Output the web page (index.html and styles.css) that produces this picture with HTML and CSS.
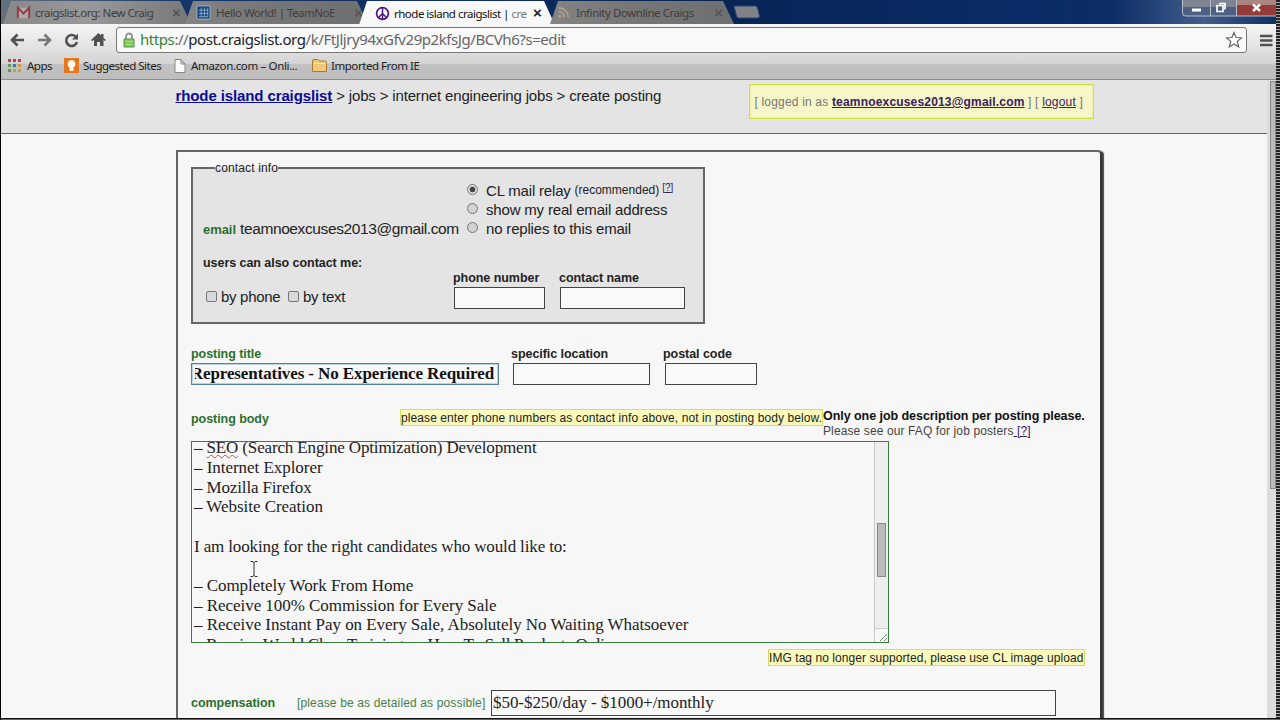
FILE: index.html
```html
<!DOCTYPE html>
<html lang="en">
<head>
<meta charset="utf-8">
<title>rhode island craigslist | create posting</title>
<link rel="stylesheet" href="styles.css">
</head>
<body>
<div class="window">
  <div class="tabstrip">
    <div class="tab tab-one"><svg class="fav" viewBox="0 0 16 16"><path d="M2 3h12v11H2z" fill="#b5aaaa"/><path d="M2 14V3l6 6 6-6v11" fill="none" stroke="#963f48" stroke-width="2.2"/></svg><span class="tab-title t1">craigslist.org: New Craig</span><span class="x">×</span></div>
    <div class="tab tab-two"><svg class="fav" viewBox="0 0 16 16"><path d="M1 1h14v14H1z" fill="#17467c" stroke="#9db3c7"/><path d="M3 5.500h10M3 9h10M3 12.500h10M5.500 3v10M9 3v10M12.500 3v10" stroke="#9dbbd6" stroke-width=".8"/></svg><span class="tab-title t2">Hello World! | TeamNoE</span><span class="x">×</span></div>
    <div class="tab tab-active"><svg class="fav" viewBox="0 0 16 16"><circle cx="8" cy="8" r="6.300" fill="#fff" stroke="#4d1681" stroke-width="1.800"/><path d="M8 2v12M8 8l-4.500 4.500M8 8l4.500 4.500" stroke="#4d1681" stroke-width="1.600"/></svg><span class="tab-title t3">rhode island craigslist | <span class="fade">cre</span></span><span class="x">×</span></div>
    <div class="tab tab-four"><svg class="fav" viewBox="0 0 16 16"><circle cx="4" cy="12" r="1.600" fill="#b8a388"/><path d="M3 7a6 6 0 0 1 6 6M3 3a10 10 0 0 1 10 10" fill="none" stroke="#b8a388" stroke-width="1.700"/></svg><span class="tab-title t4">Infinity Downline Craigs</span><span class="x">×</span></div>
    <svg class="newtab" viewBox="0 0 28 14"><path d="M2 1h21q2 0 2.500 2l2 8q0 2-2 2H7q-2 0-2.500-2z" fill="#808285" stroke="#28477c"/></svg>
    <div class="winctl"><svg width="94" height="18" viewBox="0 0 94 18"><path d="M0 0h54v16H3q-3 0-3-3z" fill="#4d5f83"/><path d="M0 0h54v7H0z" fill="#7e8590"/><path d="M54 0h42v16H54z" fill="#963b38"/><path d="M54 0h42v5H54z" fill="#a98582"/><path d="M.5 0v13q0 3 3 3H96M28.500 0v16M54.500 0v16" fill="none" stroke="#b6bdcc"/><path d="M10 8.500h9v3h-9z" fill="#fff"/><path d="M35 5.500h6v6h-6zM37 3.500h6v6" fill="none" stroke="#fff" stroke-width="1.700"/><path d="M71 4.500l7 6.500M78 4.500L71 11" stroke="#fff" stroke-width="2.500"/></svg></div>
  </div>
  <div class="toolbar">
    <svg class="nav" width="104" height="24" viewBox="0 0 104 24"><g fill="none" stroke="#505050" stroke-width="2.600"><path d="M17 12H5.500M10.500 6.500L5 12l5.500 5.500"/><path d="M31 12h11.500M37.500 6.500L43 12l-5.500 5.500" stroke="#777"/><path d="M68.500 8.500A5.500 5.500 0 1 0 70 14"/></g><path d="M71 5.500v6h-6z" fill="#505050"/><path d="M84 12l7.500-7 2.500 2.500V6h2.500v4l2.500 2-1 1-1.500-1v6h-3.500v-4h-3v4H87v-6l-2 1z" fill="#505050"/></svg>
    <div class="omnibox"><svg width="12" height="16" viewBox="0 0 12 16"><path d="M3 8V4.500a3 3 0 0 1 6 0V8" fill="none" stroke="#8c968c" stroke-width="1.800"/><path d="M1 7h10v8H1z" fill="#83c65e" stroke="#579844"/><path d="M2 9.500h8M2 12.500h8" stroke="#a9df89"/></svg><span class="url"><span class="https">https</span>://<span class="host">post.craigslist.org</span>/k/FtJljry94xGfv29p2kfsJg/BCVh6?s=edit</span><svg class="star" width="18" height="18" viewBox="0 0 18 18"><path d="M9 1.500l2.100 5 5.400.5-4.200 3.400 1.400 5.600L9 13l-4.700 3 1.400-5.600L1.500 7l5.400-.5z" fill="#fff" stroke="#666" stroke-width="1.200"/></svg></div>
    <svg class="burger" width="13" height="13" viewBox="0 0 13 13"><path d="M0 2h12.500M0 6.500h12.500M0 11h12.500" stroke="#505050" stroke-width="2.400"/></svg>
  </div>
  <div class="bookmarks">
    <svg class="apps" width="13" height="13" viewBox="0 0 13 13"><path d="M0 0h3v3H0zM5 0h3v3H5zM10 0h3v3h-3z" fill="#b7414c"/><path d="M0 5h3v3H0z" fill="#5c9957"/><path d="M5 5h3v3H5z" fill="#397bb7"/><path d="M10 5h3v3h-3zM5 10h3v3H5zM10 10h3v3h-3z" fill="#c89b3d"/><path d="M0 10h3v3H0z" fill="#5c9957"/></svg><span class="bm b1">Apps</span>
    <svg class="sug" width="15" height="15" viewBox="0 0 15 15"><path d="M0 0h15v15H0z" fill="#e8761b"/><path d="M7.500 2a4 4 0 0 1 2 7.400V13h-4V9.400a4 4 0 0 1 2-7.400z" fill="#fff8e8"/></svg><span class="bm b2">Suggested Sites</span>
    <svg class="doc" width="12" height="14" viewBox="0 0 12 14"><path d="M1 .5h6L11 5v8.500H1zM7 .5V5h4" fill="#fafafa" stroke="#888"/></svg><span class="bm b3">Amazon.com – Onli...</span>
    <svg class="folder" width="15" height="13" viewBox="0 0 15 13"><path d="M.5 2q0-1.500 1.500-1.500h4L7.500 2H13q1.500 0 1.500 1.500v9H.5z" fill="#f2c976" stroke="#a67b38"/><path d="M1.500 4.500h12" stroke="#ffe8ac"/></svg><span class="bm b4">Imported From IE</span>
  </div>
  <div class="view">
    <div class="page">
      <div class="header">
        <div class="crumbs"><a href="#">rhode island craigslist</a> &gt; jobs &gt; internet engineering jobs &gt; create posting</div>
        <div class="login">[ logged in as <a href="#"><b>teamnoexcuses2013@gmail.com</b></a> ] [ <a href="#">logout</a> ]</div>
      </div>
      <div class="card">
        <div class="contact">
          <div class="legend">contact info</div>
          <div class="mailrow">
            <div class="email"><b class="lab green">email</b> <span class="addr">teamnoexcuses2013@gmail.com</span></div>
            <div class="radios">
              <div class="radio"><i class="dot on"></i><span class="r1">CL mail relay</span>&nbsp;<span class="rec">(recommended)</span><a class="help" href="#">[?]</a></div>
              <div class="radio"><i class="dot"></i><span class="r2">show my real email address</span></div>
              <div class="radio"><i class="dot"></i><span class="r3">no replies to this email</span></div>
            </div>
          </div>
          <b class="lab also">users can also contact me:</b>
          <div class="phonerow">
            <div class="checks"><i class="box"></i><span class="byphone">by phone</span><i class="box"></i><span>by text</span></div>
            <div class="field phone"><b class="lab">phone number</b><div class="input"></div></div>
            <div class="field name"><b class="lab">contact name</b><div class="input"></div></div>
          </div>
        </div>
        <div class="titlerow">
          <div class="field title"><b class="lab green">posting title</b><div class="input focus"><span>Representatives - No Experience Required</span></div></div>
          <div class="field loc"><b class="lab">specific location</b><div class="input"></div></div>
          <div class="field zip"><b class="lab">postal code</b><div class="input"></div></div>
        </div>
        <div class="bodyhead">
          <b class="lab green">posting body</b>
          <div class="note n1"><span>please enter phone numbers as contact info above, not in posting body below.</span></div>
          <div class="only"><b>Only one job description per posting please.</b><br><span>Please see our FAQ for job posters<a href="#"> [?]</a></span></div>
        </div>
        <div class="textarea">
          <div class="lines">
            <p class="tight">– <span class="typo">SEO</span> (Search Engine Optimization) Development</p>
            <p>– Internet Explorer</p>
            <p class="tight">– Mozilla Firefox</p>
            <p>– Website Creation</p>
            <p>&nbsp;</p>
            <p class="tight">I am looking for the right candidates who would like to:</p>
            <p>&nbsp;</p>
            <p>– Completely Work From Home</p>
            <p>– Receive 100% Commission for Every Sale</p>
            <p>– Receive Instant Pay on Every Sale, Absolutely No Waiting Whatsoever</p>
            <p class="last">– Receive World Class Training on How To Sell Products Online</p>
          </div>
          <div class="scroll"><div class="thumb"></div><svg class="grip" width="13" height="14" viewBox="0 0 13 14"><path d="M0 0h13v14H0z" fill="#f7f7f7"/><path d="M0 .5h13" stroke="#ccc"/><path d="M5 13l7-7M9 13l3-3" stroke="#718a71"/></svg></div>
          <svg class="cursor" width="8" height="16" viewBox="0 0 8 16"><path d="M.5.500H3l1 1 1-1h2.500M4 1v14M.5 15.500H3l1-1 1 1h2.500" fill="none" stroke="#333"/></svg>
        </div>
        <div class="imgnote"><div class="note n2"><span>IMG tag no longer supported, please use CL image upload</span></div></div>
        <div class="comp"><b class="lab green">compensation</b><span class="detail">[please be as detailed as possible]</span><div class="input money">$50-$250/day - $1000+/monthly</div></div>
      </div>
    </div>
    <div class="pagescroll"><div class="pagethumb"></div></div>
  </div>
  <div class="edge"></div>
  <div class="bottom"></div>
</div>
</body>
</html>
```
FILE: styles.css
```css
* { box-sizing: border-box; }
body { margin: 0; overflow: hidden; background: #f7f7f7; font-family: "Liberation Sans", Arial, sans-serif; color: #222; }
svg { display: block; flex: none; }
a { color: #39205c; }
.window { position: relative; width: 1280px; height: 720px; overflow: hidden; display: flex; flex-direction: column; border-left: 1px solid #000; white-space: nowrap; }
.tabstrip { height: 24px; flex: none; display: flex; background: linear-gradient(90deg, #64717f 0, #153669 180px, #082454 55%, #0a2c68 80%, #0c2d67 87%, #425e8a 94%, #0d2d61); font: 11.5px "Noto Sans", sans-serif; position: relative; }
.tab { height: 23px; margin-top: 1px; display: flex; align-items: center; background: linear-gradient(90deg, #848484, #777 40%, #6e6f71); color: #3d3d3d; clip-path: polygon(8px 0, calc(100% - 11px) 0, 100% 100%, 0 100%); padding-left: 13px; }
.tab-one { width: 188px; margin-left: 2px; background: linear-gradient(90deg, #888, #999 45%, #777); }
.tab-two { width: 183px; margin-left: -6px; padding-left: 11px; }
.tab-active { width: 196px; height: 24px; margin: 1px 0 0 -9px; background: #f8f8f8; color: #111; padding-left: 16px; }
.tab-four { width: 184px; margin-left: -5px; padding-left: 6px; }
.fav { width: 15px; height: 15px; flex: none; }
.tab-title { margin-left: 4px; flex: none; }
.t1 { width: 133px; letter-spacing: -.5px; }
.t2 { width: 134px; margin-left: 5px; letter-spacing: -.5px; }
.t3 { width: 135px; letter-spacing: -.5px; }
.t4 { width: 134px; margin-left: 5px; letter-spacing: -.45px; }
.fade { color: #777; }
.x { margin-left: 4px; font: bold 15px/16px "Liberation Sans", sans-serif; color: #555; }
.tab-active .x { color: #222; }
.newtab { width: 28px; height: 14px; margin: 5px 0 0 -2px; }
.winctl { margin-left: auto; padding-right: 4px; }
.toolbar { height: 29px; flex: none; display: flex; align-items: flex-start; background: linear-gradient(#f5f5f5, #dedede); padding: 3px 7px 0 6px; }
.nav { margin-top: 1px; }
.omnibox { width: 1132px; height: 26px; margin-left: 5px; border: 1px solid #777; border-radius: 3px; background: #f9f9f9; display: flex; align-items: center; padding-left: 6px; }
.url { margin: -2px 0 0 5px; font: 15px "Noto Sans", sans-serif; letter-spacing: -.43px; color: #666; }
.host { color: #222; }
.https { color: #37853a; }
.star { margin-left: auto; margin-right: 3px; }
.burger { margin: 7px 0 0 13px; }
.bookmarks { height: 27px; flex: none; display: flex; align-items: center; background: linear-gradient(#dcdcdc, #d5d5d5 40%, #c2c2c2 42%, #bdbdbd); border-bottom: 1px solid #8b8b8b; padding: 0 0 1px 7px; font: 11.5px "Noto Sans", sans-serif; color: #222; }
.bm { margin-left: 4px; margin-top: -1px; letter-spacing: -.5px; }
.b1 { width: 37px; margin-left: 6px; } .b2 { width: 91px; } .b3 { width: 121px; margin-left: 5px; letter-spacing: -.35px; } .b4 { letter-spacing: -.45px; }
.view { flex: 1; min-height: 0; display: flex; margin-right: 4px; }
.page { width: 1266px; flex: none; display: flex; flex-direction: column; overflow: hidden; }
.header { height: 54px; flex: none; display: flex; align-items: flex-start; background: #e4e4e4; border-bottom: 1px solid #666; padding-left: 174.500px; }
.crumbs { width: 573px; padding-top: 7px; font-size: 15px; line-height: 18px; letter-spacing: -.16px; }
.crumbs a { font-weight: bold; color: #0b0b9b; letter-spacing: -.11px; }
.login { width: 345px; height: 35px; margin-top: 4px; border: 1px solid #d0dc40; box-shadow: inset 0 0 0 1px #eef0a0; background: #f7f6c9; font-size: 12px; line-height: 35px; padding-left: 5px; color: #777; letter-spacing: .18px; }
.card { width: 926px; height: 620px; flex: none; margin: 16px 0 0 175px; border: 2px solid #666; border-right: 2px solid #333; border-top-right-radius: 4px; box-shadow: 2px 1px 1px #444; padding: 15px 15px 0 13px; }
.contact { position: relative; width: 514px; height: 157px; border: 2px solid #666; background: #e4e4e4; padding: 12px 0 0 10px; }
.legend { position: absolute; left: 22px; top: -8px; font-size: 12px; line-height: 14px; letter-spacing: .15px; background: linear-gradient(#f7f7f7 7px, #e4e4e4 7px); }
.lab { font-size: 12.5px; line-height: 14px; letter-spacing: -.05px; display: block; flex: none; }
.green { color: #2c702c; }
.mailrow { display: flex; align-items: flex-end; }
.email { width: 264px; display: flex; align-items: baseline; gap: 4px; line-height: 19px; }
.addr { font-size: 15.5px; letter-spacing: -.39px; }
.email .lab { font-size: 13px; }
.radio { display: flex; align-items: center; height: 19px; line-height: 19px; font-size: 14px; }
.dot { width: 11px; height: 11px; margin: -2px 8px 0 0; border: 1px solid #777; border-radius: 50%; background: #d3d3d3; }
.on { background: radial-gradient(circle, #444 0 2.5px, #ddd 3.2px); }
.r1, .r2, .r3 { font-size: 15px; letter-spacing: -.18px; }
.rec { font-size: 12px; letter-spacing: 0; }
.help { font-size: 10px; letter-spacing: 0; margin: -7px 0 0 3px; }
.also { margin-top: 18px; }
.phonerow { display: flex; margin-top: 1px; }
.checks { width: 250px; display: flex; align-items: center; padding: 13px 0 0 3px; font-size: 15px; letter-spacing: -.3px; }
.box { width: 11px; height: 11px; margin-right: 4px; border: 1px solid #777; border-radius: 2px; background: #d9d9d9; }
.byphone { width: 67px; }
.field .input { margin: 2px 0 0 2px; height: 22px; }
.contact .input { margin-left: 1px; }
.input { border: 1px solid #444; background: #f9f9f9; }
.phone { width: 106px; } .phone .input { width: 91px; }
.name .input { width: 125px; }
.titlerow { display: flex; margin-top: 23px; }
.title { width: 320px; }
.title .input { width: 308px; margin-left: 0; border: 1px solid #55839b; box-shadow: inset 0 0 0 1px #bad2df; display: flex; padding: 0 3px; font: bold 17px/20px "Liberation Serif", "Times New Roman", serif; letter-spacing: -.1px; color: #111; }
.title .input span { width: 299px; overflow: hidden; direction: rtl; }
.loc { width: 152px; } .loc .input { width: 137px; }
.zip .input { width: 92px; }
.bodyhead { height: 56px; display: flex; align-items: flex-start; padding-top: 24px; }
.bodyhead > .lab { width: 209px; margin-top: 3px; }
.note { height: 17px; flex: none; border: 1px solid #d6de62; background: #fafabd; font-size: 12px; line-height: 16px; color: #222; }
.n1 { width: 423px; letter-spacing: .09px; }
.only { font-size: 12px; line-height: 15px; color: #444; letter-spacing: .11px; }
.only b { font-size: 12.5px; letter-spacing: -.05px; color: #111; }
.textarea { position: relative; width: 698px; height: 202px; border: 1px solid #397c42; overflow: hidden; display: flex; }
.lines { width: 682px; margin-top: -3.600px; padding-left: 2px; font: 17px/19.65px "Liberation Serif", "Times New Roman", serif; letter-spacing: -.04px; }
.lines p { margin: 0; height: 19.65px; }
.lines .tight { letter-spacing: -.14px; }
.lines .last { letter-spacing: -.25px; }
.typo { text-decoration: underline wavy #c44b4b 1px; text-underline-offset: 1px; }
.scroll { width: 14px; border-left: 1px solid #c9c9c9; background: #eeeeef; display: flex; flex-direction: column; justify-content: space-between; }
.thumb { width: 9px; height: 54px; margin: 81px 0 0 2px; background: #bcbcbc; border: 1px solid #888; }
.cursor { position: absolute; left: 58px; top: 119px; }
.imgnote { display: flex; justify-content: flex-end; margin-top: 6px; }
.n2 { width: 317px; letter-spacing: .06px; }
.comp { display: flex; align-items: center; margin-top: 24px; }
.comp .lab { width: 106px; }
.detail { width: 194px; color: #478047; font-size: 12px; letter-spacing: .14px; }
.money { width: 565px; height: 26px; padding-left: 1px; font: 17px/23px "Liberation Serif", "Times New Roman", serif; letter-spacing: -.05px; color: #222; }
.pagescroll { width: 9px; background: #ddd; padding-top: 1px; }
.pagethumb { margin-left: 3px; height: 408px; background: #bbb; border: 1px solid #888; }
.edge { position: absolute; right: 0; top: 0; width: 4px; height: 720px; background: repeating-linear-gradient(#222 0 2px, #aaa 2px 3px); }
.bottom { position: absolute; left: 0; right: 0; bottom: 0; height: 2px; background: linear-gradient(#111 0 1px, #626475 1px); }
```
